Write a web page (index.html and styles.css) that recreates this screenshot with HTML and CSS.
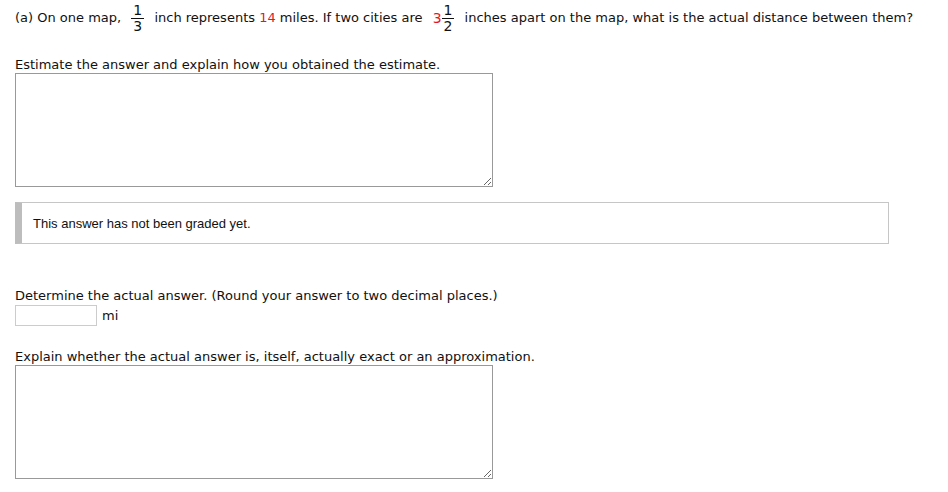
FILE: index.html
```html
<!DOCTYPE html>
<html>
<head>
<meta charset="utf-8">
<link rel="stylesheet" href="styles.css">
</head>
<body>
<div class="page">
  <p class="question">(a) On one map, <span class="frac"><span class="num">1</span><span class="den">3</span></span> inch represents <span class="red">14</span> miles. If two cities are <span class="red whole">3</span><span class="frac tight"><span class="num">1</span><span class="den">2</span></span> inches apart on the map, what is the actual distance between them?</p>

  <p class="label first">Estimate the answer and explain how you obtained the estimate.</p>
  <textarea class="area"></textarea>

  <div class="graded">This answer has not been graded yet.</div>

  <p class="label second">Determine the actual answer. (Round your answer to two decimal places.)</p>
  <div class="answer-row"><input class="num-input" type="text"><span class="unit">mi</span></div>

  <p class="label third">Explain whether the actual answer is, itself, actually exact or an approximation.</p>
  <textarea class="area"></textarea>
</div>
</body>
</html>
```
FILE: styles.css
```css
html, body {
  margin: 0;
  padding: 0;
  background: #fff;
}
.page {
  padding: 0 0 0 15px;
  font-family: "DejaVu Sans", Verdana, sans-serif;
  font-size: 13px;
  color: #111;
}
p {
  margin: 0;
}
.question {
  height: 35px;
  display: flex;
  align-items: center;
  white-space: pre;
}
.frac {
  display: inline-flex;
  flex-direction: column;
  align-items: center;
  margin: 0 6px 0 6px;
  font-size: 14px;
}
.frac.tight {
  margin-left: 0;
}
.whole {
  margin-left: 6px;
  font-size: 14px;
}
.frac .num {
  line-height: 14px;
  padding: 0 2px 1px;
  border-bottom: 1px solid #111;
}
.frac .den {
  line-height: 14px;
}
.red {
  color: #e8132a;
}
.label {
  line-height: 15px;
}
.label.first {
  margin-top: 22px;
}
.area {
  display: block;
  box-sizing: border-box;
  width: 478px;
  height: 114px;
  margin: 1px 0 0 0;
  border: 1px solid #999;
  padding: 2px;
  resize: both;
  font-family: inherit;
}
.graded {
  box-sizing: border-box;
  width: 874px;
  height: 42px;
  margin-top: 15px;
  border: 1px solid #c6c6c6;
  border-left: 7px solid #bdbdbd;
  padding-left: 11px;
  display: flex;
  align-items: center;
  font-family: "Liberation Sans", Arial, sans-serif;
  font-size: 13px;
  color: #111;
}
.label.second {
  margin-top: 44px;
}
.answer-row {
  display: flex;
  align-items: center;
  margin-top: 2px;
}
.num-input {
  box-sizing: border-box;
  width: 82px;
  height: 21px;
  margin: 0;
  border: 1px solid #ccc;
  padding: 1px 3px;
}
.unit {
  margin-left: 5px;
}
.label.third {
  margin-top: 23px;
}
```
